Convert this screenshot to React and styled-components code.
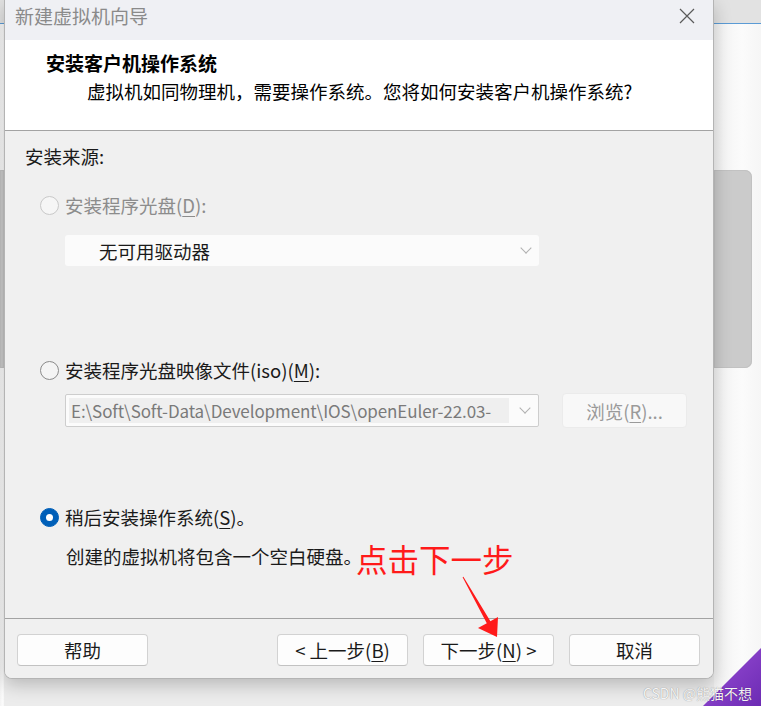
import React from 'react';
import styled, { createGlobalStyle } from 'styled-components';

const GlobalStyle = createGlobalStyle`
    html, body {
        margin: 0;
        padding: 0;
        overflow: hidden;
        background: #ececec;
    }
    * {
        box-sizing: border-box;
    }
`;

const FONT = `"Noto Sans CJK SC", "Noto Sans", "Liberation Sans", sans-serif`;

const App = () => {
    return (
        <>
            <GlobalStyle />
            <Desktop>
                <SideStrip>
                    <BackTop />
                    <BackLine />
                    <BackFill>
                        <BackPanel $side="left" />
                    </BackFill>
                </SideStrip>
                <DialogColumn>
                    <Dialog>
                        <TitleBar>
                            <TitleText>新建虚拟机向导</TitleText>
                            <CloseButton>
                                <svg width="16" height="16" viewBox="0 0 16 16">
                                    <path d="M1 1 L15 15 M15 1 L1 15" stroke="#5a5a5a" strokeWidth="1.2" fill="none" />
                                </svg>
                            </CloseButton>
                        </TitleBar>
                        <Header>
                            <HeaderTitle>安装客户机操作系统</HeaderTitle>
                            <HeaderSub>虚拟机如同物理机，需要操作系统。您将如何安装客户机操作系统?</HeaderSub>
                        </Header>
                        <Body>
                            <SectionLabel>安装来源:</SectionLabel>

                            <RadioRow $top={25}>
                                <Radio $disabled />
                                <RadioLabel $disabled>
                                    安装程序光盘(<u>D</u>):
                                </RadioLabel>
                            </RadioRow>
                            <Indent $top={18}>
                                <DriveSelect>
                                    <span>无可用驱动器</span>
                                    <Chevron />
                                </DriveSelect>
                            </Indent>

                            <RadioRow $top={92}>
                                <Radio />
                                <RadioLabel>
                                    安装程序光盘映像文件(iso)(<u>M</u>):
                                </RadioLabel>
                            </RadioRow>
                            <Indent $top={11}>
                                <IsoCombo>
                                    <IsoText>E:\Soft\Soft-Data\Development\IOS\openEuler-22.03-</IsoText>
                                    <Chevron />
                                </IsoCombo>
                                <BrowseButton>
                                    浏览(<u>R</u>)...
                                </BrowseButton>
                            </Indent>

                            <RadioRow $top={77}>
                                <Radio $checked />
                                <RadioLabel>
                                    稍后安装操作系统(<u>S</u>)。
                                </RadioLabel>
                            </RadioRow>
                            <DescRow>
                                <Desc>创建的虚拟机将包含一个空白硬盘。</Desc>
                                <Callout>点击下一步</Callout>
                            </DescRow>
                        </Body>
                        <Footer>
                            <FootButton $push>帮助</FootButton>
                            <FootButton>
                                &lt; 上一步(<u>B</u>)
                            </FootButton>
                            <FootButton>
                                下一步(<u>N</u>) &gt;
                            </FootButton>
                            <FootButton>取消</FootButton>
                        </Footer>
                        <Arrow width="60" height="75" viewBox="0 0 60 75">
                            <polygon
                                points="11.6,7.2 35.8,53.2 27,58 46,67 47,47 39.4,51.2 12.4,6.8"
                                fill="#ff1a1a"
                            />
                        </Arrow>
                    </Dialog>
                </DialogColumn>
                <SideStrip $wide>
                    <BackTop />
                    <BackLine />
                    <BackFill>
                        <BackPanel $side="right" />
                    </BackFill>
                </SideStrip>
                <Corner />
                <Watermark>CSDN @熊猫不想</Watermark>
            </Desktop>
        </>
    );
};

const Desktop = styled.div`
    position: relative;
    display: flex;
    width: 761px;
    height: 706px;
    overflow: hidden;
    font-family: ${FONT};
    background: #ececec;
`;
const SideStrip = styled.div`
    display: flex;
    flex-direction: column;
    width: ${p => (p.$wide ? '47px' : '4px')};
    flex-shrink: 0;
    height: 100%;
`;
const BackTop = styled.div`
    height: 23px;
    background: #e2e2e2;
`;
const BackLine = styled.div`
    height: 1px;
    background: #5b9bd5;
`;
const BackFill = styled.div`
    flex: 1;
    padding-top: 146px;
    background: linear-gradient(to right, #f3f3f3, #fbfbfb 60%, #f6f6f6);
`;
const BackPanel = styled.div`
    height: 198px;
    width: ${p => (p.$side === 'right' ? '38px' : '100%')};
    background: #cbcbcb;
    border-radius: ${p => (p.$side === 'right' ? '0 7px 7px 0' : '0')};
    box-shadow: inset 0 0 0 1px #c2c2c2;
`;
const DialogColumn = styled.div`
    width: 710px;
    flex-shrink: 0;
    height: 100%;
    background: #ececec;
`;
const Dialog = styled.div`
    position: relative;
    display: flex;
    flex-direction: column;
    width: 710px;
    height: 679px;
    background: #f0f0f0;
    border: 1px solid #b4b4b4;
    border-top: none;
    border-radius: 0 0 8px 8px;
    box-shadow: 0 6px 18px rgba(0, 0, 0, 0.22);
    overflow: hidden;
`;
const TitleBar = styled.div`
    display: flex;
    justify-content: space-between;
    align-items: flex-start;
    height: 40px;
    padding: 4px 14px 0 10px;
    background: #eff0f4;
`;
const TitleText = styled.div`
    font-size: 19px;
    line-height: 24px;
    color: #8a8a8a;
`;
const CloseButton = styled.div`
    display: flex;
    align-items: center;
    justify-content: center;
    width: 20px;
    height: 24px;
    margin-right: 2px;
`;
const Header = styled.div`
    height: 91px;
    padding: 10px 0 0 41px;
    background: #ffffff;
    border-bottom: 1px solid #a3a3a3;
`;
const HeaderTitle = styled.div`
    font-size: 19px;
    font-weight: 700;
    line-height: 26px;
    color: #000;
`;
const HeaderSub = styled.div`
    margin-top: 3px;
    padding-left: 41px;
    font-size: 18.5px;
    line-height: 24px;
    color: #000;
`;
const Body = styled.div`
    flex: 1;
    padding: 13px 0 0 20px;
    background: #f0f0f0;
    border-bottom: 1px solid #a3a3a3;
    box-shadow: 0 1px 0 #fafafa;
`;
const SectionLabel = styled.div`
    font-size: 18.5px;
    line-height: 24px;
    color: #1a1a1a;
`;
const RadioRow = styled.div`
    display: flex;
    align-items: center;
    gap: 6px;
    height: 24px;
    margin: ${p => p.$top}px 0 0 15px;
`;
const Radio = styled.span`
    position: relative;
    width: 19px;
    height: 19px;
    border-radius: 50%;
    flex-shrink: 0;
    background: ${p => (p.$checked ? '#005fb8' : p.$disabled ? '#f6f6f6' : '#f4f4f4')};
    border: 1px solid ${p => (p.$checked ? '#005fb8' : p.$disabled ? '#c9c9c9' : '#8a8a8a')};
    &::after {
        content: '';
        display: ${p => (p.$checked ? 'block' : 'none')};
        position: absolute;
        left: 5px;
        top: 5px;
        width: 7px;
        height: 7px;
        border-radius: 50%;
        background: #fff;
    }
`;
const RadioLabel = styled.span`
    font-size: 18.5px;
    line-height: 24px;
    color: ${p => (p.$disabled ? '#8c8c8c' : '#1a1a1a')};
    white-space: nowrap;
    u {
        text-underline-offset: 3px;
    }
`;
const Indent = styled.div`
    display: flex;
    align-items: center;
    gap: 23px;
    margin: ${p => p.$top}px 0 0 40px;
`;
const DriveSelect = styled.div`
    display: flex;
    align-items: center;
    justify-content: space-between;
    width: 474px;
    height: 31px;
    padding: 0 9px 0 34px;
    background: #fbfbfb;
    border-radius: 3px;
    font-size: 18.5px;
    color: #1a1a1a;
`;
const Chevron = styled.span`
    width: 8px;
    height: 8px;
    margin-top: -5px;
    flex-shrink: 0;
    border-right: 1px solid #b0b0b0;
    border-bottom: 1px solid #b0b0b0;
    transform: rotate(45deg);
`;
const IsoCombo = styled.div`
    display: flex;
    align-items: center;
    gap: 12px;
    width: 474px;
    height: 33px;
    padding: 3px 9px 3px 3px;
    background: #fbfbfb;
    border: 1px solid #cdcdcd;
    border-radius: 2px;
`;
const IsoText = styled.div`
    flex: 1;
    height: 25px;
    padding-left: 2px;
    background: #efefef;
    font-size: 17px;
    letter-spacing: -0.1px;
    line-height: 25px;
    color: #7a7a7a;
    white-space: nowrap;
    overflow: hidden;
`;
const BrowseButton = styled.div`
    display: flex;
    align-items: center;
    justify-content: center;
    width: 125px;
    height: 35px;
    background: #f8f8f8;
    border: 1px solid #ebebeb;
    border-radius: 4px;
    font-size: 18.5px;
    color: #9a9a9a;
    white-space: nowrap;
    u {
        text-underline-offset: 3px;
    }
`;
const DescRow = styled.div`
    display: flex;
    align-items: flex-start;
    margin: 10px 0 0 41px;
    height: 38px;
`;
const Desc = styled.span`
    margin-top: 5px;
    font-size: 18.5px;
    line-height: 24px;
    color: #1a1a1a;
`;
const Callout = styled.span`
    margin-left: -6px;
    font-size: 31.5px;
    line-height: 38px;
    color: #ff1a1a;
`;
const Footer = styled.div`
    display: flex;
    align-items: flex-start;
    gap: 15px;
    height: 59px;
    padding: 15px 13px 0 12px;
    background: #f0f0f0;
`;
const FootButton = styled.div`
    display: flex;
    align-items: center;
    justify-content: center;
    width: 131px;
    height: 32px;
    margin-right: ${p => (p.$push ? 'auto' : '0')};
    background: #fdfdfd;
    border: 1px solid #d2d2d2;
    border-bottom-color: #c2c2c2;
    border-radius: 4px;
    font-size: 18.5px;
    color: #1a1a1a;
    white-space: nowrap;
    u {
        text-underline-offset: 3px;
    }
`;
const Arrow = styled.svg`
    position: absolute;
    left: 446px;
    top: 570px;
`;
const Corner = styled.div`
    position: absolute;
    right: 0;
    bottom: 0;
    width: 58px;
    height: 58px;
    background: linear-gradient(135deg, #9b4fd8, #6c2bb3);
    clip-path: polygon(100% 0, 100% 100%, 0 100%);
`;
const Watermark = styled.div`
    position: absolute;
    right: 9px;
    bottom: 4px;
    font-size: 14px;
    line-height: 18px;
    color: #f4f4f4;
    text-shadow: 0 0 1px rgba(0, 0, 0, 0.45);
    white-space: nowrap;
`;

export default App;
